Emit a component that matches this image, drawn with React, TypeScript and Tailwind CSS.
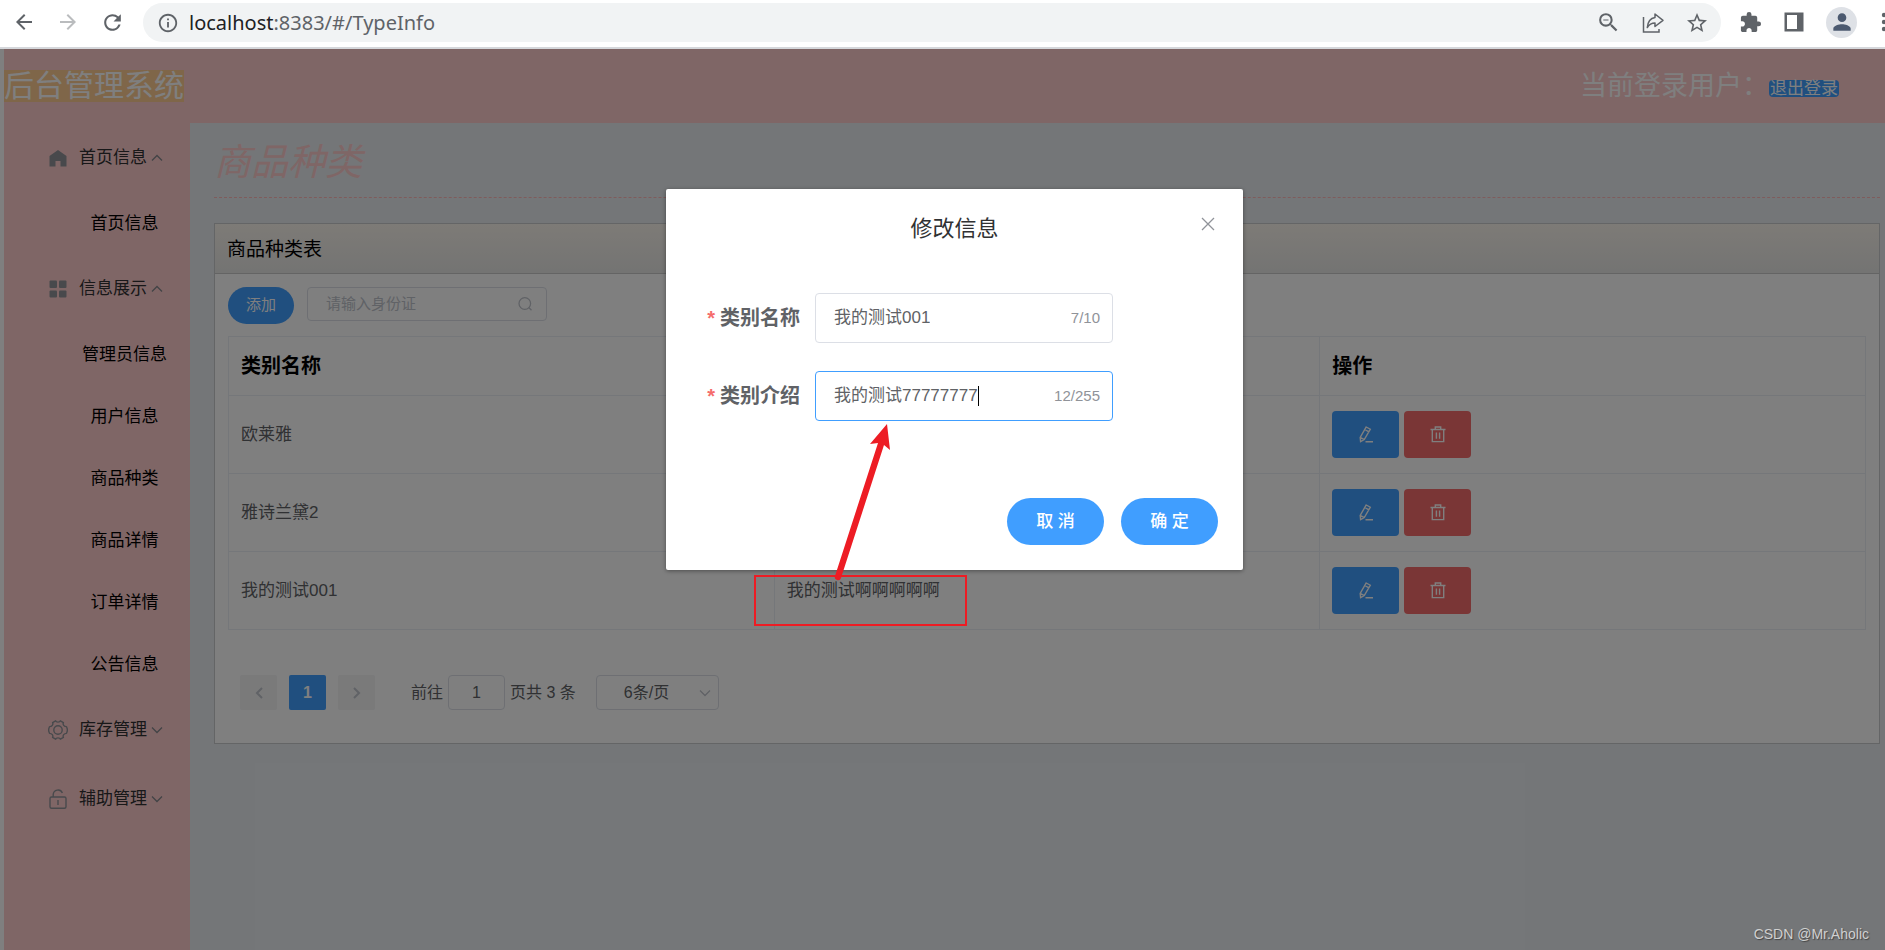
import type { ReactNode } from 'react';
import {
  MdArrowBack,
  MdArrowForward,
  MdExtension,
  MdInfoOutline,
  MdOutlineZoomOut,
  MdPerson,
  MdRefresh,
  MdStarBorder,
} from 'react-icons/md';

const menu = [
  { title: '首页信息', icon: <HomeIcon />, open: true, items: ['首页信息'] },
  {
    title: '信息展示',
    icon: <GridIcon />,
    open: true,
    items: ['管理员信息', '用户信息', '商品种类', '商品详情', '订单详情', '公告信息'],
  },
  { title: '库存管理', icon: <SettingIcon />, open: false, items: [] },
  { title: '辅助管理', icon: <UnlockIcon />, open: false, items: [] },
];

const rows = [
  { name: '欧莱雅', intro: '' },
  { name: '雅诗兰黛2', intro: '' },
  { name: '我的测试001', intro: '我的测试啊啊啊啊啊' },
];

function HomeIcon() {
  return (
    <svg viewBox="0 0 18 18" className="size-[18px]" fill="currentColor">
      <path d="M9 1 L17.5 7 V17.5 H11.5 V12 H6.5 V17.5 H0.5 V7 Z" />
    </svg>
  );
}

function GridIcon() {
  return (
    <svg viewBox="0 0 18 18" className="size-[18px]" fill="currentColor">
      <rect x="0.5" y="0.5" width="7.5" height="7.5" rx="1" />
      <rect x="10" y="0.5" width="7.5" height="7.5" rx="1" />
      <rect x="0.5" y="10.5" width="7.5" height="7" rx="1" />
      <rect x="10" y="10.5" width="7.5" height="7" rx="1" />
    </svg>
  );
}

function SettingIcon() {
  return (
    <svg viewBox="0 0 20 20" className="size-5" fill="none" stroke="currentColor" strokeWidth="1.4">
      <path
        strokeLinejoin="round"
        d="M7.6 0.8 C8.2 2.6 11.8 2.6 12.4 0.8 L15.4 2.6 C14.5 4.6 16 6.6 18.5 6.6 L19.3 9 V11 L18.5 13.4 C16 13.4 14.5 15.4 15.4 17.4 L12.4 19.2 C11.8 17.4 8.2 17.4 7.6 19.2 L4.6 17.4 C5.5 15.4 4 13.4 1.5 13.4 L0.7 11 V9 L1.5 6.6 C4 6.6 5.5 4.6 4.6 2.6 Z"
      />
      <circle cx="10" cy="10" r="4.2" />
    </svg>
  );
}

function UnlockIcon() {
  return (
    <svg viewBox="0 0 20 20" className="size-5" fill="none" stroke="currentColor" strokeWidth="1.4">
      <rect x="2" y="8" width="16" height="11.3" rx="1.5" />
      <path d="M5.2 8 V5.6 A4.8 4.8 0 0 1 14.4 4 M10 11 V16" />
    </svg>
  );
}

function Chevron({ up = false }: { up?: boolean }) {
  return (
    <svg viewBox="0 0 12 8" className="h-2 w-3" fill="none" stroke="currentColor" strokeWidth="1.3">
      <path d={up ? 'M1 6.5 L6 1.5 L11 6.5' : 'M1 1.5 L6 6.5 L11 1.5'} />
    </svg>
  );
}

function EditIcon() {
  return (
    <svg viewBox="0 0 16 17" className="h-[17px] w-4" fill="none" stroke="currentColor" strokeWidth="1.4">
      <path d="M8.2 1 L12.3 3.2 L6.3 13.6 L2.6 15.6 L2.2 11.4 Z M6.8 3.5 L10.9 5.8 M2.2 11.4 L6.3 13.6 M7.5 15.8 H15" />
    </svg>
  );
}

function DeleteIcon() {
  return (
    <svg viewBox="0 0 16 17" className="h-[17px] w-4" fill="none" stroke="currentColor" strokeWidth="1.4">
      <path d="M0.5 3.5 H15.5 M5.3 3.5 V1 H10.7 V3.5 M2.3 3.5 V15.6 H13.7 V3.5 M6.4 6.5 V12.7 M9.6 6.5 V12.7" />
    </svg>
  );
}

function BrowserBar() {
  return (
    <div className="flex h-[49px] shrink-0 items-start overflow-hidden border-b-2 border-[#d5d7db] bg-white pt-[3px] text-[#5f6368]">
      <div className="flex h-[38px] items-center gap-5 pr-[18px] pl-3">
        <button aria-label="后退"><MdArrowBack className="size-6" /></button>
        <button aria-label="前进" className="text-[#babcbe]"><MdArrowForward className="size-6" /></button>
        <button aria-label="刷新"><MdRefresh className="size-[25px]" /></button>
      </div>
      <div className="flex h-[39px] flex-1 items-center rounded-full bg-[#f1f3f4] px-3">
        <MdInfoOutline className="mx-[2px] size-[22px]" />
        <p className="ml-2 flex-1 font-['Noto_Sans',sans-serif] text-xl leading-6">
          <span className="text-[#202124]">localhost</span>:8383/#/TypeInfo
        </p>
        <div className="flex items-center gap-5">
          <button aria-label="缩放"><MdOutlineZoomOut className="size-[25px]" /></button>
          <button aria-label="分享">
            <svg viewBox="0 0 24 24" className="size-6" fill="none" stroke="currentColor" strokeWidth="1.5">
              <path d="M2.5 6 V21 H18 V18" />
              <path strokeLinejoin="round" d="M14 3 L22 9.3 L14 15.5 V12 C10.5 12 8.3 13.2 6.3 16.5 C6.8 11 9.5 7.2 14 6.5 Z" />
            </svg>
          </button>
          <button aria-label="收藏"><MdStarBorder className="size-6" /></button>
        </div>
      </div>
      <div className="-mr-4 flex h-[38px] items-center gap-5 pl-[18px]">
        <button aria-label="扩展程序"><MdExtension className="size-[23px]" /></button>
        <button aria-label="侧边栏">
          <svg viewBox="0 0 24 24" className="size-6" fill="currentColor">
            <path fillRule="evenodd" d="M2.5 2.5 H21.5 V21.5 H2.5 Z M5 5 V19 H15 V5 Z" />
          </svg>
        </button>
        <button aria-label="用户" className="flex size-[31px] items-center justify-center rounded-full bg-[#dee1e6] text-[#4c5a70]">
          <MdPerson className="size-[26px]" />
        </button>
        <button aria-label="更多">
          <svg viewBox="0 0 24 24" className="size-6" fill="currentColor">
            <circle cx="7" cy="5" r="2.2" />
            <circle cx="7" cy="12" r="2.2" />
            <circle cx="7" cy="19" r="2.2" />
          </svg>
        </button>
      </div>
    </div>
  );
}

function Sidebar() {
  return (
    <nav className="w-[186px] shrink-0 bg-[#ffcccc]">
      {menu.map((group) => (
        <div key={group.title}>
          <button className="flex h-[69px] w-full items-center pl-11 text-[17px] text-[#303133]">
            <span className="flex w-5 justify-center text-[#909399]">{group.icon}</span>
            <span className="ml-[11px]">{group.title}</span>
            <span className="ml-1 text-[#85878c]"><Chevron up={group.open} /></span>
          </button>
          {group.items.map((item) => (
            <a key={item} href="#" className="flex h-[62px] items-center justify-center pt-[2px] pl-[55px] text-[17px] text-black">
              {item}
            </a>
          ))}
        </div>
      ))}
    </nav>
  );
}

function TypeTable() {
  return (
    <table className="mt-3 w-full table-fixed border-collapse text-left text-[17px] text-[#606266]">
      <thead>
        <tr className="h-[59px] text-xl text-black">
          <th className="border border-[#ebeef5] px-3 font-bold">类别名称</th>
          <th className="border border-[#ebeef5] px-3 font-bold">类别介绍</th>
          <th className="border border-[#ebeef5] px-3 font-bold">操作</th>
        </tr>
      </thead>
      <tbody>
        {rows.map((row) => (
          <tr key={row.name} className="h-[78px]">
            <td className="border border-[#ebeef5] px-3">{row.name}</td>
            <td className="border border-[#ebeef5] px-3">{row.intro}</td>
            <td className="border border-[#ebeef5] px-3">
              <div className="flex gap-[5px] text-white">
                <button aria-label="编辑" className="flex h-[47px] w-[67px] items-center justify-center rounded bg-[#409eff]">
                  <EditIcon />
                </button>
                <button aria-label="删除" className="flex h-[47px] w-[67px] items-center justify-center rounded bg-[#f56c6c]">
                  <DeleteIcon />
                </button>
              </div>
            </td>
          </tr>
        ))}
      </tbody>
    </table>
  );
}

function Pagination() {
  return (
    <div className="mt-[45px] flex items-center pl-3 text-base text-[#606266]">
      <div className="flex gap-3">
        <button aria-label="上一页" className="flex h-[35px] w-[37px] items-center justify-center rounded-xs bg-[#f4f4f5] text-[#c0c4cc]">
          <svg viewBox="0 0 8 12" className="h-3 w-2" fill="none" stroke="currentColor" strokeWidth="2">
            <path d="M7 1 L2 6 L7 11" />
          </svg>
        </button>
        <button className="h-[35px] w-[37px] rounded-xs bg-[#409eff] font-bold text-white">1</button>
        <button aria-label="下一页" className="flex h-[35px] w-[37px] items-center justify-center rounded-xs bg-[#f4f4f5] text-[#c0c4cc]">
          <svg viewBox="0 0 8 12" className="h-3 w-2" fill="none" stroke="currentColor" strokeWidth="2">
            <path d="M1 1 L6 6 L1 11" />
          </svg>
        </button>
      </div>
      <label className="ml-9 flex items-center gap-[5px]">
        前往
        <input defaultValue="1" className="h-[35px] w-[57px] rounded border border-[#dcdfe6] text-center" />
      </label>
      <span className="ml-[5px]">页共 3 条</span>
      <div className="relative ml-5">
        <select aria-label="每页条数" className="h-[35px] w-[123px] appearance-none rounded border border-[#dcdfe6] bg-transparent pl-[27px]">
          <option>6条/页</option>
        </select>
        <span className="pointer-events-none absolute inset-y-0 right-2 flex items-center text-[#c0c4cc]"><Chevron /></span>
      </div>
    </div>
  );
}

type FieldProps = { id: string; label: string; count: string; focused?: boolean; value: string };

function Field({ id, label, value, count, focused }: FieldProps) {
  return (
    <div className="flex h-[50px] items-center">
      <label htmlFor={id} className="w-[134px] text-right text-xl font-bold text-[#606266]">
        <span className="mr-[5px] text-[#f56c6c]">*</span>
        {label}
      </label>
      <div
        className={
          focused
            ? 'ml-[15px] flex h-full w-[298px] items-center rounded border border-[#409eff] pr-3 pl-[18px]'
            : 'ml-[15px] flex h-full w-[298px] items-center rounded border border-[#dcdfe6] pr-3 pl-[18px]'
        }
      >
        <input id={id} defaultValue={value} className="field-sizing-content text-[17px] text-[#606266] outline-none" />
        {focused && <span className="h-5 w-px bg-black" />}
        <span className="ml-auto text-[15px] text-[#909399]">{count}</span>
      </div>
    </div>
  );
}

function RoundButton({ children }: { children: ReactNode }) {
  return (
    <button className="h-[47px] w-[97px] rounded-full bg-[#409eff] text-[17px] font-medium text-white">
      {children}
    </button>
  );
}

function EditDialog() {
  return (
    <div role="dialog" aria-label="修改信息" className="relative w-[577px] rounded-xs bg-white shadow-[0_1px_4px_rgba(0,0,0,0.4)]">
      <div className="relative pt-6">
        <h2 className="text-center text-[22px] leading-8 text-[#303133]">修改信息</h2>
        <button aria-label="关闭" className="absolute top-7 right-7 text-[#909399]">
          <svg viewBox="0 0 14 14" className="size-[14px]" fill="none" stroke="currentColor" strokeWidth="1.3">
            <path d="M1 1 L13 13 M13 1 L1 13" />
          </svg>
        </button>
      </div>
      <form className="mt-12 flex flex-col gap-7">
        <Field id="type-name" label="类别名称" value="我的测试001" count="7/10" />
        <Field id="type-intro" label="类别介绍" value="我的测试77777777" count="12/255" focused />
      </form>
      <div className="mt-[77px] flex justify-end gap-[17px] pr-[25px] pb-[25px]">
        <RoundButton>取 消</RoundButton>
        <RoundButton>确 定</RoundButton>
      </div>
      {/* marker from the table row to the edited field */}
      <svg viewBox="0 0 214 204" className="pointer-events-none absolute top-[234px] left-[88px] h-[204px] w-[214px]">
        <rect x="1" y="153" width="211" height="49" fill="none" stroke="#ed1c24" strokeWidth="2" />
        <path d="M133 1 L116 21 L124 20 L81 153 A3 3 0 0 0 87 155 L130 22 L136 27 Z" fill="#ed1c24" />
      </svg>
    </div>
  );
}

export default function App() {
  return (
    <div className="flex min-h-screen flex-col overflow-hidden bg-white font-['Liberation_Sans','Noto_Sans_CJK_SC',sans-serif]">
      <BrowserBar />
      <div className="relative flex flex-1 flex-col pl-1">
        <header className="flex h-[74px] shrink-0 items-center justify-between bg-[#ffcccc] pr-[46px] text-white">
          <h1 className="bg-[#ffcc93] text-[30px] leading-8">后台管理系统</h1>
          <div className="flex items-center text-[27px] leading-8">
            当前登录用户：
            <button className="mt-1 rounded bg-[#409eff] px-px text-[17px] leading-[17px]">退出登录</button>
          </div>
        </header>
        <div className="flex flex-1">
          <Sidebar />
          <main className="min-w-0 flex-1 bg-[#e9edf1] pr-[5px] pl-6">
            <h2 className="flex h-[75px] items-center border-b border-dashed border-[#ffb8b8] pt-[6px] text-[37px] text-[#ffcccc] italic">
              商品种类
            </h2>
            <section className="mt-[25px] border border-[#c8cacc] bg-white">
              <h3 className="flex h-[50px] items-center border-b border-[#c8c8c8] bg-linear-to-b from-[#fbf6ee] to-[#e8e8e6] pt-1 pl-3 text-[19px] text-black">
                商品种类表
              </h3>
              <div className="px-[13px] pt-[13px] pb-[33px]">
                <div className="flex items-start gap-[13px]">
                  <button className="h-[37px] w-[66px] rounded-full bg-[#409eff] text-[15px] text-white">添加</button>
                  <div className="flex h-[34px] w-60 items-center rounded border border-[#dcdfe6] pr-[14px] pl-[18px]">
                    <input
                      aria-label="请输入身份证"
                      placeholder="请输入身份证"
                      className="min-w-0 flex-1 text-[15px] outline-none placeholder:text-[#c0c4cc]"
                    />
                    <svg viewBox="0 0 14 14" className="size-[14px]" fill="none" stroke="#c0c4cc" strokeWidth="1.3">
                      <circle cx="6.8" cy="6.5" r="5.8" />
                      <path d="M10.8 10.5 L13.5 13.3" />
                    </svg>
                  </div>
                </div>
                <TypeTable />
                <Pagination />
              </div>
            </section>
          </main>
        </div>
        <div className="absolute inset-0 flex items-start justify-center bg-black/50 pt-[140px] pl-6">
          <EditDialog />
        </div>
        <p className="absolute right-4 bottom-[6px] text-sm text-[#d0d0d0] [text-shadow:1px_1px_1px_#444]">CSDN @Mr.Aholic</p>
      </div>
    </div>
  );
}
